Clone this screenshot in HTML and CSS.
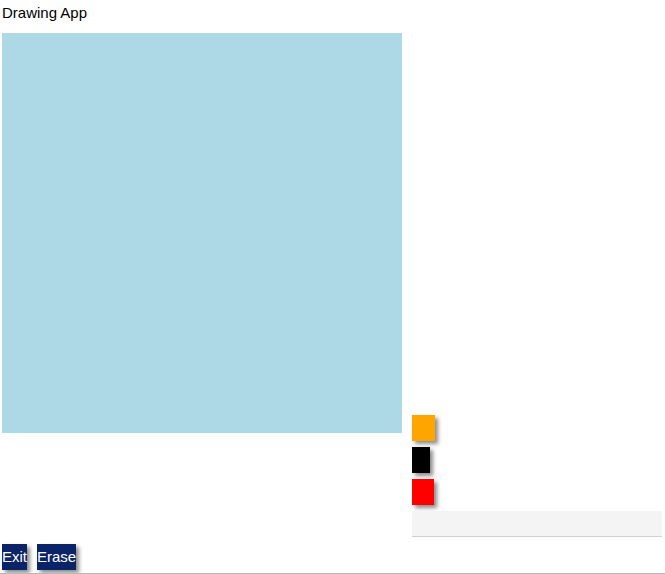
FILE: index.html
```html
<!DOCTYPE html>
<html>
<head>
<meta charset="utf-8">
<title>Drawing App</title>
<link rel="stylesheet" href="styles.css">
</head>
<body>
<div class="app">
  <div class="title">Drawing App</div>
  <div class="main">
    <div class="canvas"></div>
    <div class="side">
      <div class="swatch orange"></div>
      <div class="swatch black"></div>
      <div class="swatch red"></div>
      <div class="field"></div>
    </div>
  </div>
  <div class="buttons">
    <button class="btn">Exit</button>
    <button class="btn">Erase</button>
  </div>
  <div class="rule"></div>
</div>
</body>
</html>
```
FILE: styles.css
```css
html, body {
  margin: 0;
  padding: 0;
  background: #fff;
}
.app {
  font-family: "Liberation Sans", Arial, sans-serif;
  font-size: 15px;
  color: #000;
  padding: 0 0 0 2px;
  display: flex;
  flex-direction: column;
}
.title {
  height: 17px;
  padding-top: 4px;
  line-height: 17px;
  margin-bottom: 12px;
}
.main {
  display: flex;
  align-items: flex-start;
}
.canvas {
  width: 400px;
  height: 400px;
  background: #add8e6;
  flex: none;
}
.side {
  margin-left: 10px;
  width: 250px;
  padding-top: 382px;
  display: flex;
  flex-direction: column;
  gap: 6px;
}
.swatch {
  height: 26px;
  box-shadow: 3px 3px 4px rgba(0, 0, 0, 0.45);
}
.orange { width: 23px; background: #ffa500; }
.black { width: 18px; background: #000; }
.red { width: 22px; background: #ff0000; }
.field {
  height: 25px;
  background: #f4f4f4;
  border-bottom: 1px solid #d0d0d0;
}
.buttons {
  display: flex;
  gap: 10px;
  margin-top: 7px;
}
.btn {
  height: 26px;
  padding: 0;
  margin: 0;
  border: none;
  background: #0b2468;
  color: #fff;
  font-family: "Liberation Sans", Arial, sans-serif;
  font-size: 15px;
  line-height: 26px;
  box-shadow: 3px 3px 4px rgba(0, 0, 0, 0.45);
}
.rule {
  margin-top: 3px;
  margin-left: -2px;
  height: 1px;
  background: #b8b8b8;
}
```
